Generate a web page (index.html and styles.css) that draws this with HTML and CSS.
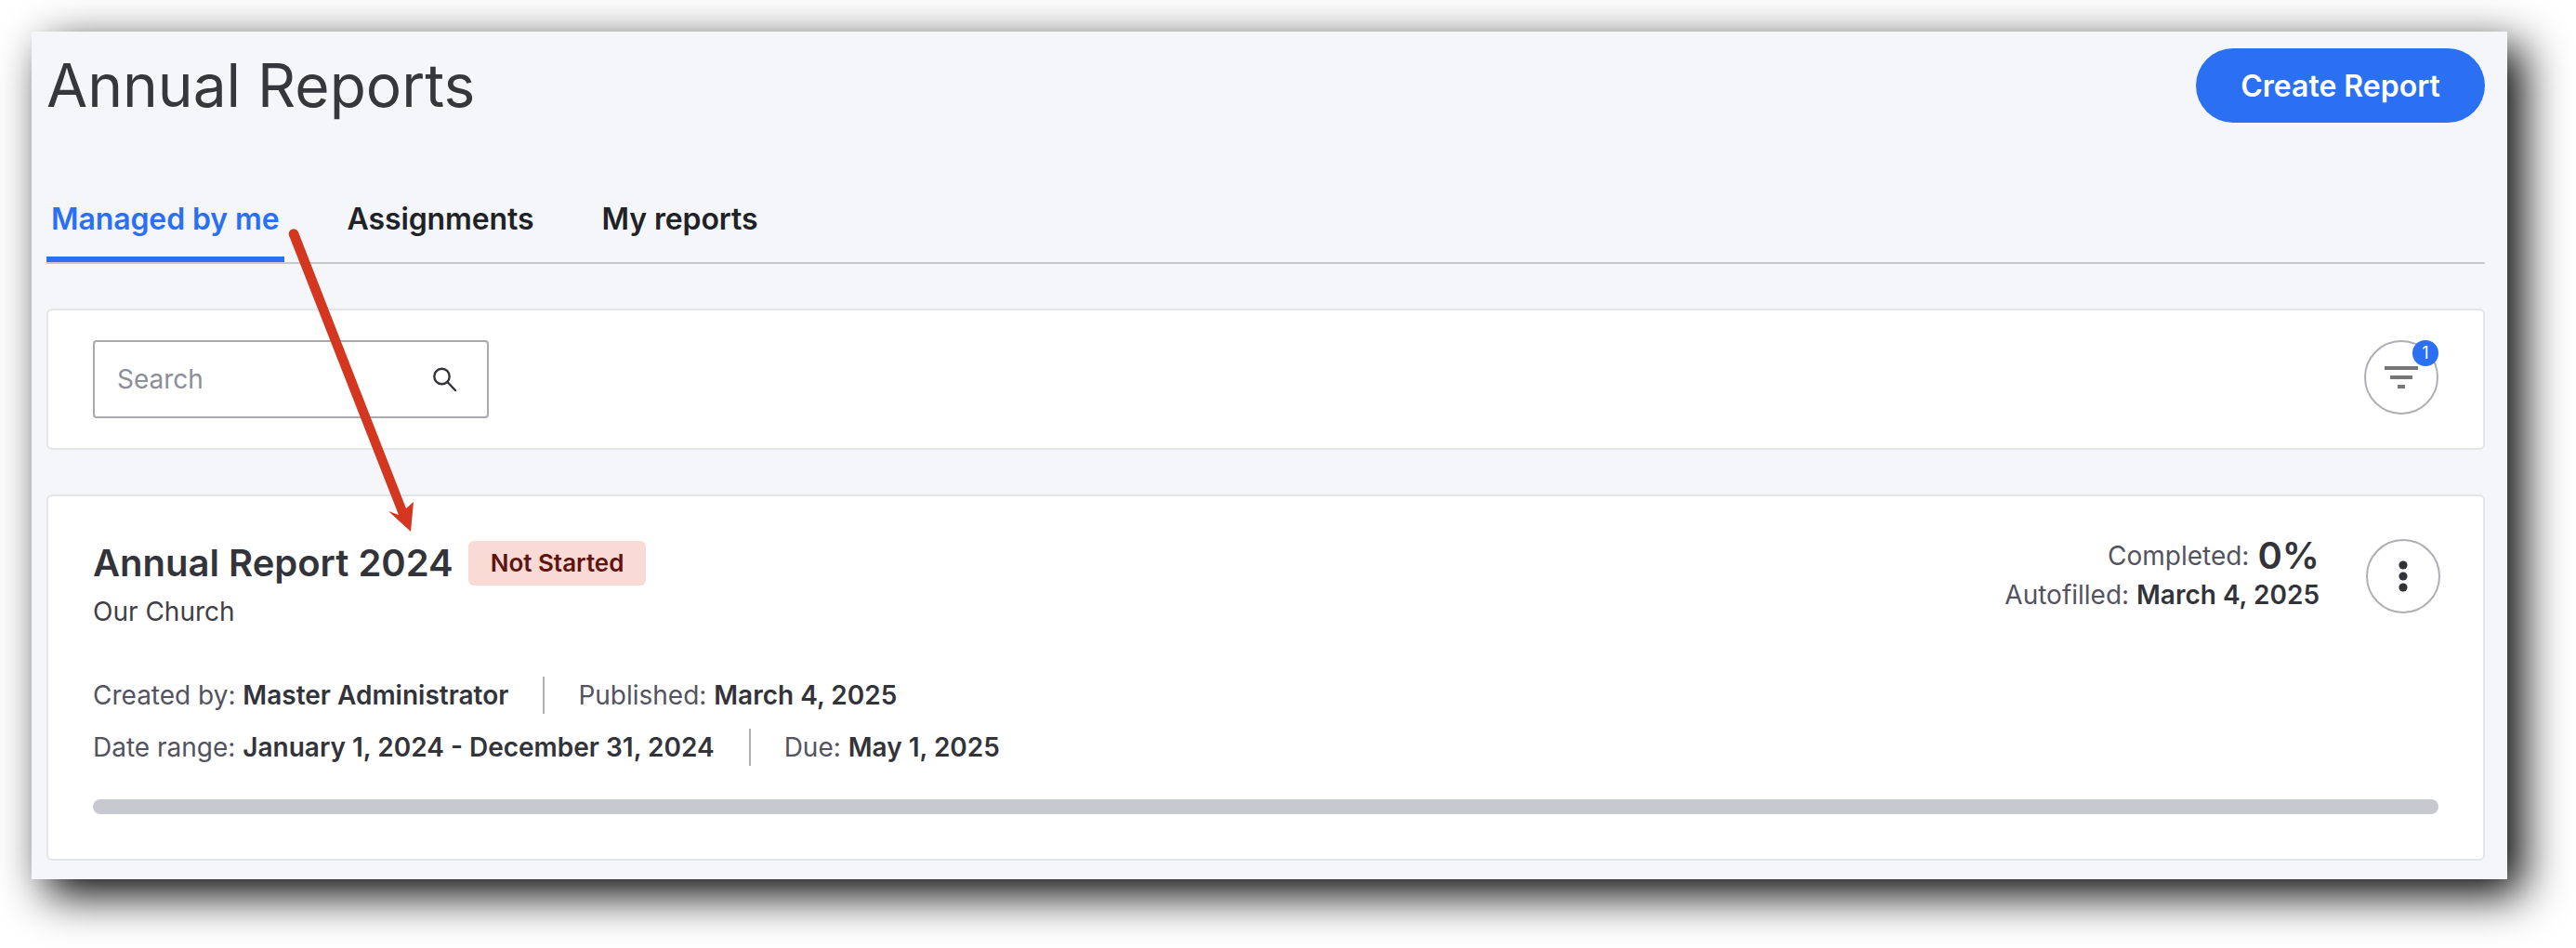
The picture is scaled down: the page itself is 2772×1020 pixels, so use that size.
FILE: index.html
```html
<!DOCTYPE html>
<html lang="en">
<head>
<meta charset="utf-8">
<title>Annual Reports</title>
<link rel="stylesheet" href="styles.css">
</head>
<body>
<main class="window">
  <header class="page-header">
    <h1 class="page-title">Annual Reports</h1>
    <button class="btn-create">Create Report</button>
  </header>
  <nav class="tabs">
    <a class="tab tab-active">Managed by me</a>
    <a class="tab">Assignments</a>
    <a class="tab">My reports</a>
  </nav>
  <section class="card search-card">
    <div class="search">
      <span class="search-text">Search</span>
      <svg class="search-icon" width="28" height="28" viewBox="0 0 28 28" fill="none" stroke="#33343a" stroke-width="2.4" stroke-linecap="round"><circle cx="11.5" cy="11" r="8.2"/><path d="M17.5 17l8.5 9"/></svg>
    </div>
    <button class="round-btn filter-btn">
      <svg width="36" height="24" viewBox="0 0 36 24" fill="#767676"><rect width="36" height="4"/><rect x="6" y="10" width="24" height="4"/><rect x="14" y="20" width="8" height="4"/></svg>
      <span class="badge">1</span>
    </button>
  </section>
  <section class="card report-card">
    <div class="report-top">
      <div class="report-main">
        <div class="report-title-row">
          <h2 class="report-title">Annual Report 2024</h2>
          <span class="status">Not Started</span>
        </div>
        <div class="report-org">Our Church</div>
      </div>
      <div class="report-stats">
        <div class="stat-completed"><span>Completed:</span><b class="stat-pct">0%</b></div>
        <div class="stat-auto">Autofilled: <b>March 4, 2025</b></div>
      </div>
      <button class="round-btn kebab">
        <svg width="10" height="34" viewBox="0 0 10 34" fill="#33343a"><circle cx="5" cy="5" r="4.6"/><circle cx="5" cy="17" r="4.6"/><circle cx="5" cy="29" r="4.6"/></svg>
      </button>
    </div>
    <div class="meta">
      <div class="meta-row"><span class="meta-item">Created by: <b>Master Administrator</b></span><span class="meta-item">Published: <b>March 4, 2025</b></span></div>
      <div class="meta-row"><span class="meta-item">Date range: <b>January 1, 2024 - December 31, 2024</b></span><span class="meta-item">Due: <b>May 1, 2025</b></span></div>
    </div>
    <div class="progress"></div>
  </section>
  <svg class="arrow" width="2772" height="1020" viewBox="0 0 2772 1020" fill="#d43720"><circle cx="316" cy="251.5" r="5.3"/><polygon points="311,253.3 321,249.7 437,547 445,540 442,572 418,550 429,554"/></svg>
</main>
</body>
</html>
```
FILE: styles.css
```css
* { box-sizing: border-box; }
html, body { margin: 0; padding: 0; background: #fff; }
body {
  width: 2772px;
  height: 1020px;
  overflow: hidden;
  padding: 34px;
  font-family: Inter, "Liberation Sans", sans-serif;
  color: #33343a;
}
b { font-weight: 600; }
button { font-family: inherit; cursor: pointer; }
.window {
  width: 2664px;
  height: 912px;
  padding: 18px 24px 0 16px;
  background: #f4f6fa;
  box-shadow: 16px 16px 46px #000;
}
.page-header { display: flex; justify-content: space-between; align-items: center; height: 80px; }
.page-title { margin: 0; font-size: 64px; line-height: 80px; font-weight: 400; color: #36373d; }
.btn-create {
  width: 311px; height: 80px; padding: 0; border: 0; border-radius: 40px;
  background: #2b6ff2; color: #fff; font-size: 32px; font-weight: 600;
}
.tabs { display: flex; gap: 63px; margin-top: 84px; border-bottom: 2px solid #c8c9d0; }
.tab {
  padding: 0 5px 20px; border-bottom: 6px solid transparent;
  font-size: 32px; line-height: 40px; font-weight: 600; letter-spacing: -.1px; color: #212226;
}
.tab-active { color: #2b6ff2; border-bottom-color: #2b6ff2; }
.card { background: #fff; border: 2px solid #e4e5ea; border-radius: 6px; }
.search-card {
  display: flex; justify-content: space-between; align-items: flex-start;
  height: 152px; margin-top: 48px; padding: 32px 48px 31px 48px;
}
.search {
  display: flex; justify-content: space-between; align-items: center;
  width: 426px; height: 84px; padding: 0 32px 0 24px;
  border: 2px solid #a9aab0; border-radius: 4px;
}
.search-text { font-size: 28px; color: #8c8f97; }
.search-icon { flex: none; }
.round-btn {
  position: relative; display: flex; align-items: center; justify-content: center;
  width: 80px; height: 80px; padding: 0; background: #fff;
  border: 2px solid #aeafb5; border-radius: 50%;
}
.badge {
  position: absolute; top: -2px; right: -2px;
  width: 28px; height: 28px; border-radius: 50%;
  background: #2b6ff2; color: #fff; font-size: 18px; line-height: 28px; text-align: center;
}
.report-card { height: 394px; margin-top: 48px; padding: 48px 48px 0; }
.report-top { display: flex; align-items: flex-start; }
.report-main { flex: 1; }
.report-title-row { display: flex; align-items: center; gap: 16px; height: 48px; }
.report-title { margin: 0; font-size: 40px; line-height: 48px; font-weight: 600; color: #33343a; }
.status {
  height: 48px; padding: 0 24px; border-radius: 6px;
  background: #f9dad5; color: #5e1410; font-size: 26px; line-height: 48px; font-weight: 600;
}
.report-org { margin-top: 8px; font-size: 28px; line-height: 40px; color: #3f4046; }
.report-stats { text-align: right; font-size: 28px; color: #53535f; }
.report-stats b { color: #33343a; }
.stat-completed { display: flex; justify-content: flex-end; align-items: center; gap: 9px; height: 32px; line-height: 32px; }
.stat-pct { font-size: 40px; }
.stat-auto { margin-top: 6px; line-height: 40px; }
.kebab { margin: -2px -2px 0 50px; }
.meta { display: flex; flex-direction: column; gap: 16px; margin-top: 50px; }
.meta-row { display: flex; font-size: 28px; line-height: 40px; color: #53535f; }
.meta-row b { color: #33343a; }
.meta-item + .meta-item { margin-left: 37px; padding-left: 36px; border-left: 2px solid #aeafb5; }
.progress { height: 16px; margin-top: 36px; border-radius: 8px; background: #c8c9cf; }
.arrow { position: absolute; top: 0; left: 0; pointer-events: none; }
```
